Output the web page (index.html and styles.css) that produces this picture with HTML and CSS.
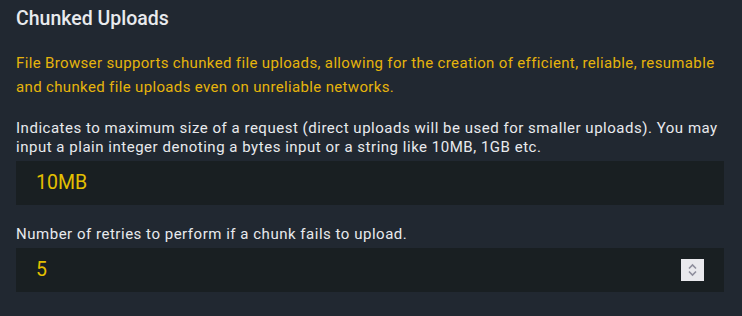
FILE: index.html
```html
<!DOCTYPE html>
<html lang="en">
<head>
<meta charset="utf-8">
<title>Chunked Uploads</title>
<link rel="stylesheet" href="styles.css">
</head>
<body>
<section class="panel">
  <h2 class="title">Chunked Uploads</h2>
  <p class="note">File Browser supports chunked file uploads, allowing for the creation of efficient, reliable, resumable and chunked file uploads even on unreliable networks.</p>
  <div class="field">
    <label class="label" for="chunk-size">Indicates to maximum size of a request (direct uploads will be used for smaller uploads). You may input a plain integer denoting a bytes input or a string like 10MB, 1GB etc.</label>
    <div class="input-box">
      <input class="input" id="chunk-size" type="text" value="10MB">
    </div>
  </div>
  <div class="field">
    <label class="label" for="retries">Number of retries to perform if a chunk fails to upload.</label>
    <div class="input-box">
      <input class="input" id="retries" type="text" value="5">
      <span class="spinner" aria-hidden="true">
        <svg width="23" height="22" viewBox="0 0 23 22">
          <path d="M8 9.5 L11.5 6 L15 9.5" fill="none" stroke="#8f8f9d" stroke-width="1.6"/>
          <path d="M8 12.5 L11.5 16 L15 12.5" fill="none" stroke="#8f8f9d" stroke-width="1.6"/>
        </svg>
      </span>
    </div>
  </div>
</section>
</body>
</html>
```

FILE: styles.css
```css
* { box-sizing: border-box; }
html, body {
  margin: 0;
  padding: 0;
  background: #212831;
}
body {
  font-family: Roboto, "Liberation Sans", Arial, sans-serif;
  color: #e8eaed;
}
.panel {
  padding: 7px 18px 25px 16px;
  display: flex;
  flex-direction: column;
}
.title {
  margin: 0;
  font-size: 19.5px;
  line-height: 24px;
  font-weight: 500;
  color: #e8eaed;
}
.note {
  margin: 20px 0 0;
  font-size: 15px;
  line-height: 24px;
  letter-spacing: 0.35px;
  color: #e6b40c;
}
.field {
  margin-top: 20px;
  display: flex;
  flex-direction: column;
  gap: 4px;
}
.label {
  font-size: 15px;
  line-height: 19px;
  letter-spacing: 0.52px;
  color: #e8eaed;
}
.input-box {
  height: 44px;
  background: #191f22;
  display: flex;
  align-items: center;
  padding: 0 20px 0 20px;
}
.input {
  flex: 1;
  min-width: 0;
  border: 0;
  outline: 0;
  background: transparent;
  padding: 0;
  font-family: Roboto, "Liberation Sans", Arial, sans-serif;
  font-size: 19.5px;
  line-height: 24px;
  color: #e4c000;
}
.spinner {
  width: 23px;
  height: 22px;
  background: #e9e9ed;
  display: flex;
}
```
